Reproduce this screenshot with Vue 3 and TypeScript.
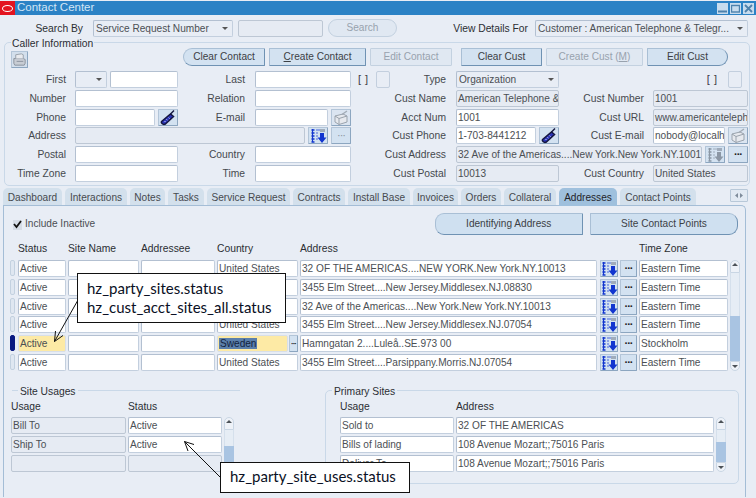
<script setup lang="ts">
interface AddressRow { status: string; site: string; addressee: string; country: string; address: string; zone: string; current?: boolean }

const tabs = [
  { label: 'Dashboard', w: 59 }, { label: 'Interactions', w: 62 }, { label: 'Notes', w: 35 },
  { label: 'Tasks', w: 36 }, { label: 'Service Request', w: 83 }, { label: 'Contracts', w: 52 },
  { label: 'Install Base', w: 62 }, { label: 'Invoices', w: 45 }, { label: 'Orders', w: 40 },
  { label: 'Collateral', w: 52 }, { label: 'Addresses', w: 58, active: true }, { label: 'Contact Points', w: 76 },
]

const rows: AddressRow[] = [
  { status: 'Active', site: '', addressee: '', country: 'United States', address: '32 OF THE AMERICAS....NEW YORK.New York.NY.10013', zone: 'Eastern Time' },
  { status: 'Active', site: '', addressee: '', country: 'United States', address: '3455 Elm Street....New Jersey.Middlesex.NJ.08830', zone: 'Eastern Time' },
  { status: 'Active', site: '', addressee: '', country: 'United States', address: '32 Ave of the Americas....New York.New York.NY.10013', zone: 'Eastern Time' },
  { status: 'Active', site: '', addressee: '', country: 'United States', address: '3455 Elm Street....New Jersey.Middlesex.NJ.07054', zone: 'Eastern Time' },
  { status: 'Active', site: '', addressee: '', country: 'Sweden', address: 'Hamngatan 2....Luleå..SE.973 00', zone: 'Stockholm', current: true },
  { status: 'Active', site: '', addressee: '', country: 'United States', address: '3455 Elm Street....Parsippany.Morris.NJ.07054', zone: 'Eastern Time' },
]

const usages = [
  { usage: 'Bill To', status: 'Active' },
  { usage: 'Ship To', status: 'Active' },
  { usage: '', status: '' },
]

const primary = [
  { usage: 'Sold to', address: '32 OF THE AMERICAS' },
  { usage: 'Bills of lading', address: '108 Avenue Mozart;;75016 Paris' },
  { usage: 'Deliver To', address: '108 Avenue Mozart;;75016 Paris' },
]
</script>

<template>
  <div class="app">
    <svg class="defs" width="0" height="0" aria-hidden="true">
      <symbol id="i-list" viewBox="0 0 18 17">
        <path d="M2.500 3h3M2.500 6h3M2.500 9h3M2.500 12h3M2.500 15h3" stroke="currentColor" stroke-width="1.300" fill="none" />
        <path d="M3.500 2v13" stroke="currentColor" stroke-width="1.200" fill="none" />
        <path d="M7 3h4M7 6h2M7 9h2M7 12h2" stroke="currentColor" stroke-width="1" fill="none" opacity=".7" />
        <path d="M11 6h4v4.500h2.500L13 16l-4.500-5.500H11z" fill="currentColor" />
        <path d="M11 2h5v3h-5z" fill="#8f9aa8" opacity=".75" />
      </symbol>
      <symbol id="i-phone" viewBox="0 0 20 17">
        <path d="M3.500 12.500 12.500 5l3 2.500L7.500 15q-2 1-3.500-.5-1-1-.5-2z" fill="#2c35b8" stroke="#14163f" stroke-width="1.500" />
        <path d="M12.500 5 16 1.500" stroke="#14163f" stroke-width="1.500" />
        <path d="M6.500 12l1 1M8.500 10.300l1 1M10.500 8.600l1 1" stroke="#d4dcf5" stroke-width="1" />
      </symbol>
      <symbol id="i-box" viewBox="0 0 20 17">
        <path d="M4 7l8-2 4 2v6l-8 2.500-4-2.500z" fill="#e6e9ee" stroke="#9aa3ad" />
        <path d="M4 7l4 2.500 8-2.500M8 9.500v6" fill="none" stroke="#9aa3ad" />
        <path d="M11 5.500 16 2" stroke="#a2abb5" stroke-width="1.400" />
      </symbol>
      <symbol id="i-folder" viewBox="0 0 18 18">
        <path d="M3 8h10l2 1v4l-1 2H4l-1-2z" fill="#c8cdd4" stroke="#8a929c" />
        <path d="M5 8V4l6-1 2 1v4" fill="#e8eaee" stroke="#98a0aa" />
        <path d="M6 11h7" stroke="#8a929c" />
      </symbol>
    </svg>

    <header class="titlebar">
      <span class="logo"><i></i></span>
      <span class="title">Contact Center</span>
      <span class="winbtns">
        <b class="wb"><svg width="9" height="9"><path d="M0 7.500h9" stroke="#4d82ad" stroke-width="2" /></svg></b>
        <b class="wb"><svg width="9" height="9"><rect x=".5" y="1.500" width="8" height="6.500" fill="none" stroke="#4d82ad" stroke-width="1.400" /></svg></b>
        <b class="wb"><svg width="9" height="9"><path d="M1 1l7 7M8 1l-7 7" stroke="#4d82ad" stroke-width="1.800" /></svg></b>
      </span>
    </header>

    <section class="searchrow">
      <label class="lbl search-lbl">Search By</label>
      <div class="fld sel w-svc">Service Request Number<span class="caret"></span></div>
      <div class="fld off w-q"></div>
      <button class="btn dis round-both w-search">Search</button>
      <label class="lbl view-lbl">View Details For</label>
      <div class="fld sel w-view">Customer : American Telephone &amp; Telegr...<span class="caret"></span></div>
    </section>

    <section class="caller">
      <h3 class="legend caller-legend">Caller Information</h3>
      <div class="caller-top">
        <button class="ibtn folder"><svg width="17" height="17"><use href="#i-folder" /></svg></button>
        <div class="caller-btns">
          <button class="btn round-l w-82">Clear Contact</button>
          <button class="btn w-97"><u>C</u>reate Contact</button>
          <button class="btn dis w-82">Edit Contact</button>
          <button class="btn w-81 ml-9">Clear Cust</button>
          <button class="btn dis w-97"><span>Create Cust (<u>M</u>)</span></button>
          <button class="btn round-r w-81">Edit Cust</button>
        </div>
      </div>
      <div class="cform">
        <label class="lbl">First</label>
        <div class="fg"><div class="fld sel w-32"><span class="caret"></span></div><div class="fld grow"></div></div>
        <label class="lbl p10">Last</label>
        <div class="fg"><div class="fld grow"></div></div>
        <div class="lbl l3 p10"><span class="brk">[ ]</span><span class="chk"></span><span class="push">Type</span></div>
        <div class="fg"><div class="fld sel grow">Organization<span class="caret"></span></div></div>
        <span></span>
        <div class="fg end"><span class="brk">[ ]</span><span class="chk"></span></div>

        <label class="lbl">Number</label>
        <div class="fg"><div class="fld grow"></div></div>
        <label class="lbl p10">Relation</label>
        <div class="fg"><div class="fld grow"></div></div>
        <label class="lbl p10">Cust Name</label>
        <div class="fg"><div class="fld off grow clip">American Telephone &amp;</div></div>
        <label class="lbl">Cust Number</label>
        <div class="fg"><div class="fld off grow">1001</div></div>

        <label class="lbl">Phone</label>
        <div class="fg"><div class="fld grow"></div><button class="ibtn w-20"><svg width="20" height="17"><use href="#i-phone" /></svg></button></div>
        <label class="lbl p10">E-mail</label>
        <div class="fg"><div class="fld grow"></div><button class="ibtn w-20 faint"><svg width="20" height="17"><use href="#i-box" /></svg></button></div>
        <label class="lbl p10">Acct Num</label>
        <div class="fg"><div class="fld grow">1001</div></div>
        <label class="lbl">Cust URL</label>
        <div class="fg"><div class="fld off grow clip">www.americanteleph</div></div>

        <label class="lbl">Address</label>
        <div class="fg addr-span"><div class="fld off grow"></div><button class="ibtn w-20 blue"><svg width="18" height="17"><use href="#i-list" /></svg></button><button class="ibtn dots w-20 dim">···</button></div>
        <label class="lbl p10">Cust Phone</label>
        <div class="fg"><div class="fld grow">1-703-8441212</div><button class="ibtn w-20"><svg width="20" height="17"><use href="#i-phone" /></svg></button></div>
        <label class="lbl">Cust E-mail</label>
        <div class="fg"><div class="fld grow clip">nobody@localhost</div><button class="ibtn w-20 faint"><svg width="20" height="17"><use href="#i-box" /></svg></button></div>

        <label class="lbl">Postal</label>
        <div class="fg"><div class="fld grow"></div></div>
        <label class="lbl p10">Country</label>
        <div class="fg"><div class="fld grow"></div></div>
        <label class="lbl p10">Cust Address</label>
        <div class="fg cust-addr"><div class="fld off grow clip">32 Ave of the Americas....New York.New York.NY.10013</div><button class="ibtn w-20 grey"><svg width="18" height="17"><use href="#i-list" /></svg></button><button class="ibtn dots w-20">···</button></div>

        <label class="lbl">Time Zone</label>
        <div class="fg"><div class="fld grow"></div></div>
        <label class="lbl p10">Time</label>
        <div class="fg"><div class="fld grow"></div></div>
        <label class="lbl p10">Cust Postal</label>
        <div class="fg"><div class="fld off grow">10013</div></div>
        <label class="lbl">Cust Country</label>
        <div class="fg"><div class="fld off grow">United States</div></div>
      </div>
    </section>

    <nav class="tabs">
      <span v-for="t in tabs" :key="t.label" class="tab" :class="{ active: t.active }" :style="{ width: t.w + 'px' }">{{ t.label }}</span>
      <span class="tabnext"><svg width="10" height="9"><path d="M1 4.500 4 2v5zM6 2l3 2.500L6 7z" fill="#7f8c9b" /></svg></span>
    </nav>

    <main class="panel">
      <div class="panel-top">
        <div class="inc"><span class="cb"><svg width="9" height="9"><path d="M1 4l2.500 3L8 1" fill="none" stroke="#111" stroke-width="1.800" /></svg></span>Include Inactive</div>
        <button class="btn big round-l">Identifying Address</button>
        <button class="btn big round-r">Site Contact Points</button>
      </div>

      <div class="thead">
        <span></span><span>Status</span><span>Site Name</span><span>Addressee</span><span>Country</span><span>Address</span>
        <span></span><span></span><span>Time Zone</span>
      </div>

      <div class="tablewrap">
        <div class="tbody">
          <div v-for="(r, i) in rows" :key="i" class="trow">
            <span class="rowsel" :class="{ on: r.current }"></span>
            <div class="fld" :class="{ cur: r.current }">{{ r.status }}</div>
            <div class="fld">{{ r.site }}</div>
            <div class="fld">{{ r.addressee }}</div>
            <div v-if="r.current" class="ctry">
              <div class="fld cur grow"><span class="hl">{{ r.country }}</span></div>
              <button class="ibtn dots small">···</button>
            </div>
            <div v-else class="fld clip">{{ r.country }}</div>
            <div class="fld clip">{{ r.address }}</div>
            <button class="ibtn blue icon-cell"><svg width="18" height="17"><use href="#i-list" /></svg></button>
            <button class="ibtn dots dots-cell">···</button>
            <div class="fld">{{ r.zone }}</div>
          </div>
        </div>
        <div class="sb main-sb">
          <span class="cap up"></span>
          <span class="sb-light grip"></span>
          <span class="sb-dark"></span>
          <span class="cap down"></span>
        </div>
      </div>

      <div class="bottom">
        <section class="usages">
          <h3 class="legend usage-legend">Site Usages</h3>
          <div class="uhead"><span>Usage</span><span>Status</span></div>
          <div class="uwrap">
            <div class="ubody">
              <div v-for="(u, i) in usages" :key="i" class="urow">
                <div class="fld off">{{ u.usage }}</div>
                <div class="fld" :class="{ off: !u.status }">{{ u.status }}</div>
              </div>
            </div>
            <div class="sb low-sb">
              <span class="cap up"></span>
              <span class="sb-light grip"></span>
              <span class="sb-dark"></span>
            </div>
          </div>
        </section>

        <section class="primary">
          <h3 class="legend primary-legend">Primary Sites</h3>
          <div class="phead"><span>Usage</span><span>Address</span></div>
          <div class="uwrap">
            <div class="pbody">
              <div v-for="(p, i) in primary" :key="i" class="prow">
                <div class="fld">{{ p.usage }}</div>
                <div class="fld">{{ p.address }}</div>
              </div>
            </div>
            <div class="sb low-sb">
              <span class="cap up"></span>
              <span class="sb-light grip"></span>
              <span class="sb-dark"></span>
              <span class="cap down"></span>
            </div>
          </div>
        </section>
      </div>
    </main>

    <svg class="arrows" width="756" height="498" aria-hidden="true">
      <g fill="none" stroke="#111" stroke-width="1">
        <path d="M78 300 54.500 341.500" />
        <path d="M54.500 341.500 55.500 331M54.500 341.500 63 335.500" />
        <path d="M220 477 184.500 441.500" />
        <path d="M184.500 441.500 194 444.500M184.500 441.500 188 451" />
      </g>
    </svg>
    <div class="callout c1"><p>hz_party_sites.status</p><p>hz_cust_acct_sites_all.status</p></div>
    <div class="callout c2"><p>hz_party_site_uses.status</p></div>
  </div>
</template>

<style>
html, body { margin: 0; padding: 0; background: #e8edf5; }
</style>

<style scoped>
.app {
  position: relative; width: 756px; height: 498px; overflow: hidden;
  background: #e8edf5; color: #3d4146;
  font: 10.100px/1 "Liberation Sans", Arial, sans-serif;
  box-sizing: border-box; padding-top: 1px;
}
.app * { box-sizing: border-box; }
.defs { position: absolute; }
h3, p { margin: 0; font-weight: normal; }
button { font: inherit; color: inherit; padding: 0; margin: 0; cursor: default; }

.titlebar { height: 14px; background: #2b82c5; display: flex; align-items: center; }
.logo { width: 15px; height: 14px; background: #e3141f; display: flex; align-items: center; justify-content: center; }
.logo i { display: block; width: 11px; height: 7px; border: 1.500px solid #fff; border-radius: 50%; }
.title { margin-left: 2px; color: #d3e6f5; font-size: 11.500px; }
.winbtns { margin-left: auto; margin-right: 2px; display: flex; gap: 2px; }
.wb { width: 11px; height: 11px; background: #c7dcee; display: flex; align-items: center; justify-content: center; }

.lbl { display: block; text-align: right; padding-right: 9px; line-height: 17px; white-space: nowrap; color: #45494e; font-size: 10.300px; }
.lbl.p10 { padding-right: 10px; }

.searchrow { display: flex; align-items: center; height: 18px; margin-top: 4px; color: #2b2e33; }
.search-lbl { width: 92px; color: #2b2e33; padding-right: 9px; }
.view-lbl { width: 138px; color: #2b2e33; padding-right: 7px; margin-left: 0; }
.w-svc { width: 140px; margin-left: 1px; }
.w-q { width: 85px; margin-left: 5px; }
.w-search { width: 69px; margin-left: 5px; height: 17px; }
.w-view { width: 213px; }

.fld {
  position: relative; height: 17px; line-height: 15px; padding: 0 1px; min-width: 0;
  background: #fff; border: 1px solid #c3cfde; border-top-color: #b3c0d1; border-left-color: #b3c0d1;
  border-radius: 2px; white-space: nowrap; overflow: hidden; color: #4b4f54;
}
.fld.off { background: #e6ebf3; border-color: #bdc7d4; }
.fld.sel { background: #e8edf5; padding-left: 2px; padding-right: 14px; }
.fld.cur { background: #fdeaa5; border-color: #d8dfe8; }
.fld.grow, .grow { flex: 1 1 0; }
.w-32 { flex: none; width: 32px; }
.clip { overflow: hidden; }
.hl { background: #5b7fab; color: #12233d; padding: 0 1px; }
.caret { position: absolute; right: 4px; top: 6px; width: 0; height: 0; border: 3px solid transparent; border-top: 3px solid #555; border-bottom: 0; }

.btn {
  display: block; height: 18px; background: #d3e2f1; color: #3c4045;
  border: 1px solid #a9bfd5; border-right-color: #6f92b3; border-bottom-color: #6f92b3;
  border-radius: 1px; text-align: center; white-space: nowrap;
}
.btn.dis { background: #e0e8f2; color: #98a2ae; border-color: #c3d1e0; }
.round-l { border-top-left-radius: 9px; border-bottom-left-radius: 9px; }
.round-r { border-top-right-radius: 9px; border-bottom-right-radius: 9px; }
.round-both { border-radius: 9px; }
.w-82 { width: 82px; }
.w-81 { width: 81px; }
.w-97 { width: 97px; }
.ml-9 { margin-left: 5px; }

.ibtn {
  display: flex; align-items: center; justify-content: center; height: 17px; width: 18px; flex: none;
  background: #d3e2f1; border: 1px solid #b3c5d8; border-right-color: #8ca6c0; border-bottom-color: #8ca6c0; border-radius: 1px;
  color: #1a35c8;
}
.ibtn svg { flex: none; margin: -1px; }
.ibtn.w-20 { width: 20px; }
.ibtn.blue { color: #1235cf; }
.ibtn.grey { color: #8b97a5; }
.ibtn.faint { background: #dbe5f1; }
.ibtn.dots { color: #222; font-size: 11px; font-weight: bold; letter-spacing: -1px; line-height: 13px; align-items: flex-start; padding-top: 1px; }
.ibtn.dots.dim { color: #8a94a0; font-weight: normal; }
.ibtn.small { width: 9px; font-size: 8px; }
.ibtn.folder { width: 17px; height: 17px; background: #d3dfec; flex: none; margin-top: 3px; }
.icon-cell { width: 18px; margin-left: 1px; }
.dots-cell { width: 17px; }

.caller {
  position: relative; margin: 5px 6px 0 4px; height: 144px; padding: 5px 0 0 6px;
  border: 1px solid #c9d8e8; border-radius: 5px;
}
.legend { position: absolute; background: #e8edf5; color: #2b2e33; font-size: 10.300px; line-height: 12px; padding: 0 1px; white-space: nowrap; }
.caller-legend { left: 6px; top: -5px; }
.caller-top { display: flex; height: 19px; }
.caller-btns { display: flex; gap: 4px; margin-left: 155px; }
.cform {
  display: grid; margin-top: 4px; grid-auto-rows: 17px; row-gap: 1.800px;
  grid-template-columns: 64px 103px 77px 96px 105px 103px 94px 95px;
}
.fg { display: flex; gap: 3px; min-width: 0; }
.fg.end { justify-content: flex-end; align-items: center; padding-right: 6px; }
.addr-span { grid-column: 2 / span 3; }
.cust-addr { grid-column: 6 / span 3; }
.l3 { display: flex; align-items: center; padding-left: 7px; }
.push { margin-left: auto; }
.brk { font-size: 11px; color: #3d4146; word-spacing: 1px; }
.chk { display: block; width: 14px; height: 17px; background: #e8edf5; border: 1px solid #c3cfde; border-radius: 2px; margin-left: 8px; }

.tabs { display: flex; gap: 3px; margin: 1px 0 0 3px; height: 19px; align-items: flex-end; position: relative; z-index: 2; }
.tab {
  height: 18px; background: #d3e0ec; border-radius: 5px 5px 0 0; border-bottom: 1px solid #a4bdd6;
  text-align: center; line-height: 20px; white-space: nowrap; color: #464a4f; flex: none;
}
.tab.active { background: #9fc0dd; color: #1f242a; border-bottom-color: #9fc0dd; }
.tabnext {
  margin-left: 31px; align-self: flex-start; margin-top: 2px; width: 18px; height: 13px; display: flex; align-items: center; justify-content: center;
  background: #e2eaf3; border: 1px solid #b8c8d8; border-radius: 1px; flex: none;
}

.panel {
  margin: 0 10px 0 3px; height: 292px; padding: 7px 0 0 7px; margin-top: -1px;
  border: 1px solid #a4bdd6; border-bottom: 0; border-top-right-radius: 5px;
}
.panel-top { display: flex; align-items: center; height: 22px; }
.inc { display: flex; align-items: center; width: 424px; margin-left: 2px; padding-top: 1px; color: #4a4e53; }
.cb { width: 9px; height: 10px; background: #d5dce6; border: 0; margin-right: 3px; display: flex; }
.btn.big { width: 149px; height: 22px; background: #cfe0f0; margin-right: 7px; }

.thead, .trow {
  display: grid; column-gap: 2px;
  grid-template-columns: 5px 48px 71px 74px 81px 297px 19px 17px 89px;
}
.thead { height: 12px; margin-top: 8px; line-height: 12px; color: #2b2e33; white-space: nowrap; font-size: 10.300px; }
.tablewrap { display: flex; margin-top: 5px; }
.tbody { display: grid; row-gap: 1.800px; grid-auto-rows: 17px; width: 718px; }
.rowsel { width: 5px; height: 16px; margin-left: -1px; background: #dfe7f1; border: 1px solid #c3d1e0; border-radius: 2px; }
.rowsel.on { background: #0a1a80; border-color: #0a1a80; }
.ctry { display: flex; min-width: 0; gap: 1px; }

.sb { display: flex; flex-direction: column; width: 10px; margin-left: 1px; flex: none; }
.main-sb { height: 111px; }
.low-sb { height: 55px; margin-left: 2px; }
.cap { position: relative; display: block; height: 13px; background: #eef2f8; border: 1px solid #c9d6e4; flex: none; }
.cap.up { border-radius: 6px 6px 0 0; }
.cap.down { border-radius: 0 0 6px 6px; height: 10px; }
.cap.up::after, .cap.down::after { content: ""; position: absolute; left: 1px; width: 0; height: 0; border: 3px solid transparent; }
.cap.up::after { top: 2px; border-bottom: 3px solid #4c5258; border-top: 0; }
.cap.down::after { top: 3px; border-top: 3px solid #4c5258; border-bottom: 0; }
.sb-light { display: block; flex: 43 1 0; background: #e6edf5; border-left: 1px solid #d5e0ec; border-right: 1px solid #d5e0ec; }
.sb-dark { display: block; flex: 45 1 0; background: #a9c4e2; }
.low-sb .sb-light { flex: 12 1 0; }
.low-sb .sb-dark { flex: 20 1 0; }

.bottom { display: flex; margin-top: 19px; margin-left: 1px; }
.usages { position: relative; width: 228px; height: 90px; border-top: 1px solid #c9d8e8; margin-left: 0; }
.usage-legend { left: 6px; top: -5px; padding: 0 2px; }
.uhead { display: grid; grid-template-columns: 117px auto; height: 12px; margin: 10px 0 4px -1px; line-height: 12px; color: #2b2e33; font-size: 10.300px; }
.uwrap { display: flex; }
.ubody, .pbody { display: grid; row-gap: 1.800px; grid-auto-rows: 17px; }
.ubody { margin-left: -1px; }
.urow { display: grid; grid-template-columns: 115px 94px; column-gap: 2px; width: 211px; }
.primary {
  position: relative; width: 414px; height: 94px; margin-left: 85px;
  border: 1px solid #c9d8e8; border-radius: 5px; padding-left: 14px;
}
.primary-legend { left: 6px; top: -5px; padding: 0 2px; }
.phead { display: grid; grid-template-columns: 116px auto; height: 12px; margin: 10px 0 4px 0; line-height: 12px; color: #2b2e33; font-size: 10.300px; }
.prow { display: grid; grid-template-columns: 114px 258px; column-gap: 2px; }

.arrows { position: absolute; left: 0; top: 0; pointer-events: none; }
.callout {
  position: absolute; background: #fff; border: 1px solid #111; color: #0a1024;
  font-family: Lato, "Noto Sans", sans-serif; font-size: 15px; line-height: 19px;
}
.c1 { left: 77px; top: 273px; width: 209px; height: 50px; padding: 5px 0 0 9px; }
.c2 { left: 220px; top: 462px; width: 190px; height: 31px; padding: 4px 0 0 9px; }
</style>
